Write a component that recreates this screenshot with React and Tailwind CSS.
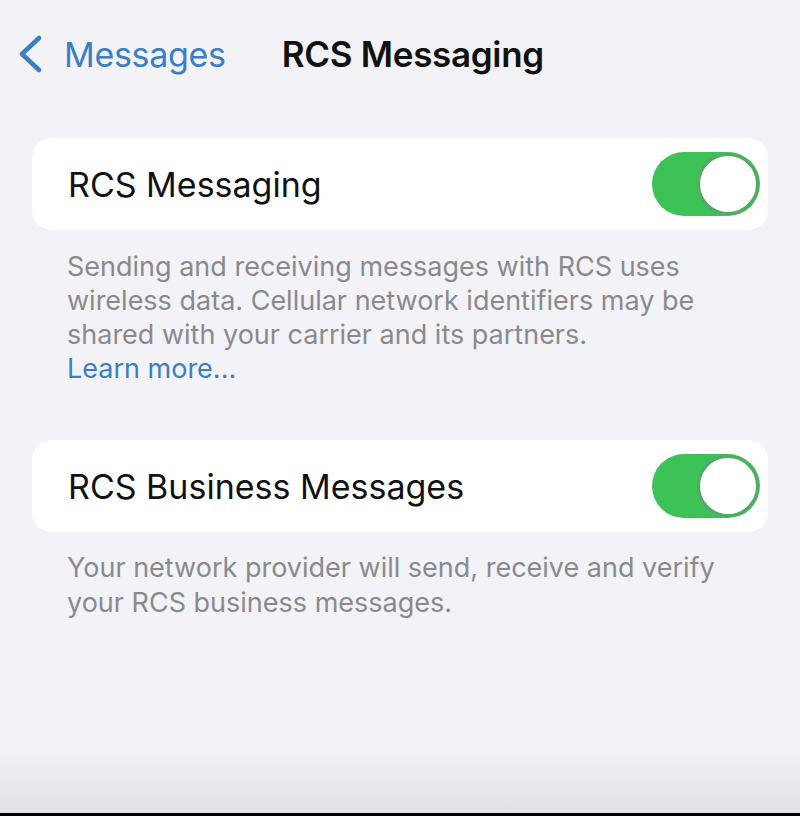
const Toggle = () => (
  <div className="w-[108px] h-[64px] rounded-full bg-[#3cc257] flex items-center justify-end p-[1px] shrink-0">
    <div className="w-[62px] h-[62px] rounded-full bg-white border-[3px] border-[#55a866]" />
  </div>
);

const SettingRow = ({ label }) => (
  <div className="mx-[32px] h-[92px] rounded-[20px] bg-white flex items-center justify-between pl-[36px] pr-[8px]">
    <span className="text-[34px] text-[#111] tracking-[0px]">{label}</span>
    <Toggle />
  </div>
);

export default function App() {
  return (
    <div
      className="w-[800px] h-[816px] bg-[#f2f2f7] flex flex-col overflow-hidden"
      style={{ fontFamily: "Inter, 'Liberation Sans', sans-serif" }}
    >
      {/* nav bar */}
      <div className="h-[110px] flex items-center pl-[18px] pb-[2px]">
        <svg width="24" height="38" viewBox="0 0 24 38" className="shrink-0">
          <path d="M21 3 L4 19 L21 35" fill="none" stroke="#3a7fc4" strokeWidth="4.5" strokeLinecap="round" strokeLinejoin="round" />
        </svg>
        <span className="ml-[22px] text-[34px] text-[#3a7fc4] tracking-[-0.3px]">Messages</span>
        <span className="ml-[56px] text-[35px] font-semibold text-[#111] tracking-[-0.3px]">RCS Messaging</span>
      </div>

      <div className="mt-[28px]">
        <SettingRow label="RCS Messaging" />
        <p className="px-[67px] pt-[20px] text-[27px] leading-[34px] text-[#8a8a8e]">
          Sending and receiving messages with RCS uses wireless data. Cellular network identifiers may be shared with your carrier and its partners.
          <br />
          <span className="text-[#3a7fc0]">Learn more...</span>
        </p>
      </div>

      <div className="mt-[54px]">
        <SettingRow label="RCS Business Messages" />
        <p className="px-[67px] pt-[18px] text-[27px] leading-[35px] text-[#8a8a8e]">
          Your network provider will send, receive and verify your RCS business messages.
        </p>
      </div>

      {/* bottom fade + edge */}
      <div className="mt-auto h-[60px] bg-gradient-to-b from-[#f2f2f6] to-[#e1e1e5]" />
      <div className="h-[3px] bg-black" />
    </div>
  );
}
